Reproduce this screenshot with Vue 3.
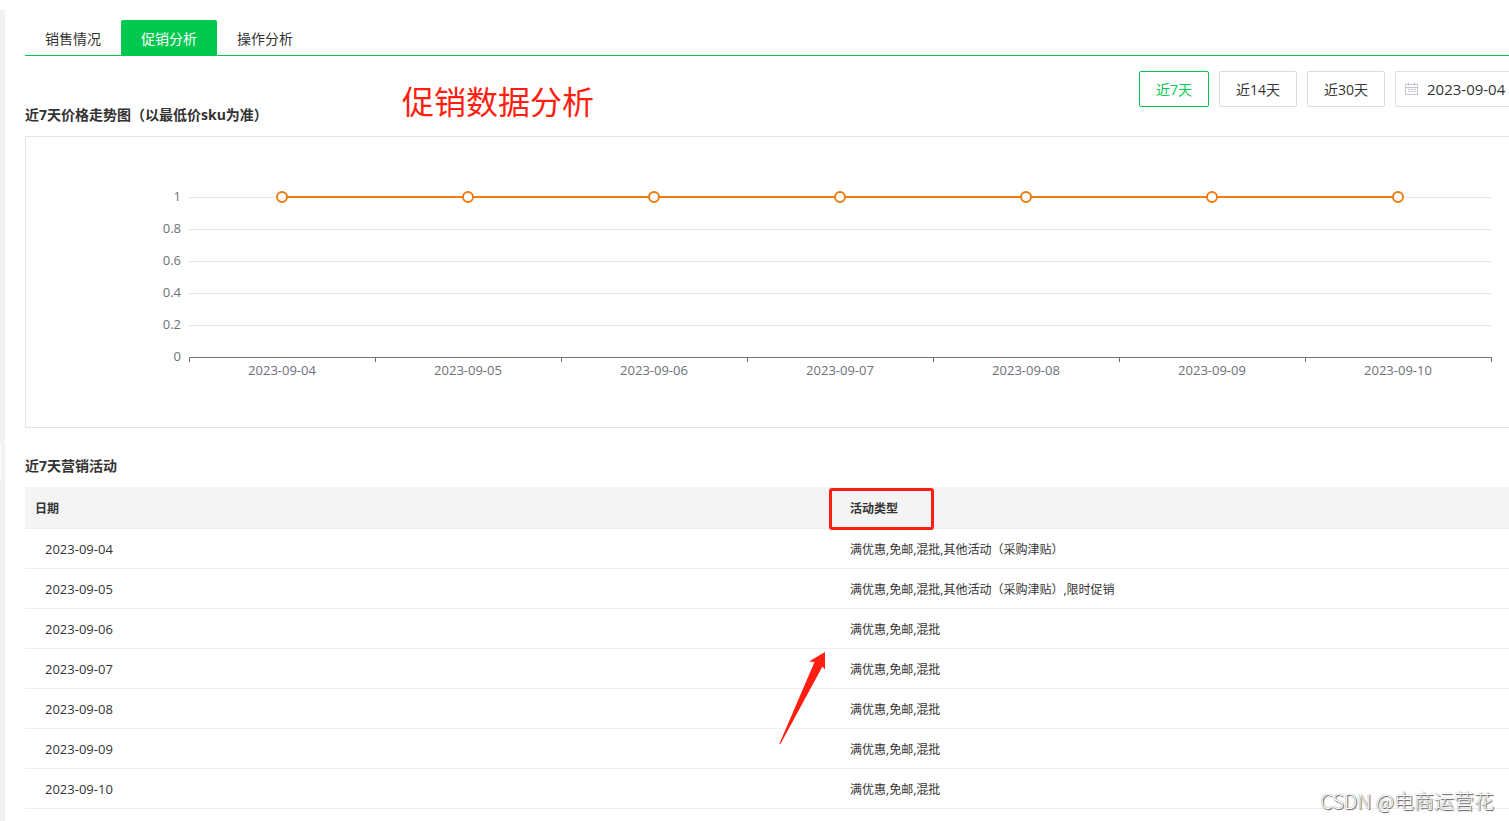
<script setup>
import { ref, computed } from 'vue';

const tabs = ['销售情况', '促销分析', '操作分析'];
const activeTab = ref('促销分析');

const ranges = [7, 14, 30];
const activeRange = ref(7);
const startDate = ref('2023-09-04');

const trend = [
  { date: '2023-09-04', price: 1 },
  { date: '2023-09-05', price: 1 },
  { date: '2023-09-06', price: 1 },
  { date: '2023-09-07', price: 1 },
  { date: '2023-09-08', price: 1 },
  { date: '2023-09-09', price: 1 },
  { date: '2023-09-10', price: 1 },
];

const activities = [
  { date: '2023-09-04', type: '满优惠,免邮,混批,其他活动（采购津贴）' },
  { date: '2023-09-05', type: '满优惠,免邮,混批,其他活动（采购津贴）,限时促销' },
  { date: '2023-09-06', type: '满优惠,免邮,混批' },
  { date: '2023-09-07', type: '满优惠,免邮,混批' },
  { date: '2023-09-08', type: '满优惠,免邮,混批' },
  { date: '2023-09-09', type: '满优惠,免邮,混批' },
  { date: '2023-09-10', type: '满优惠,免邮,混批' },
];

const steps = [1, 0.8, 0.6, 0.4, 0.2, 0];
const plotHeight = 160;

// x in percent so that the plot follows the card width, y in pixels
const points = computed(() =>
  trend.map((item, i) => ({
    date: item.date,
    x: ((i + 0.5) * 100) / trend.length + '%',
    y: (1 - item.price) * plotHeight,
  }))
);

function tickX(i) {
  return (i * 100) / trend.length + '%';
}
</script>

<template>
  <div class="page">
    <aside class="side"><span class="side-handle"></span></aside>
    <main>
      <nav class="tabs">
        <button
          v-for="tab in tabs"
          :key="tab"
          type="button"
          :class="{ active: tab === activeTab }"
          @click="activeTab = tab"
        >{{ tab }}</button>
      </nav>

      <section class="trend">
        <div class="trend-head">
          <h2>近7天价格走势图（以最低价sku为准）</h2>
          <div class="filters">
            <button
              v-for="days in ranges"
              :key="days"
              type="button"
              :class="{ active: days === activeRange }"
              @click="activeRange = days"
            >近{{ days }}天</button>
            <label class="date-box">
              <svg width="14" height="14" viewBox="0 0 14 14" fill="none" stroke="#c0c4cc">
                <path d="M0.5 2.5h12v10h-12zM0.5 5.5h12M3.5 0.5v3M9.5 0.5v3" />
                <path d="M3 7.5h2M6 7.5h2M9 7.5h2M3 9.5h2M6 9.5h2M9 9.5h2" />
              </svg>
              <input v-model="startDate" type="text" aria-label="开始日期">
            </label>
          </div>
          <div class="note">促销数据分析</div>
        </div>

        <div class="chart">
          <svg class="plot" role="img" aria-label="近7天价格走势图">
            <g v-for="(step, i) in steps" :key="step">
              <rect v-if="step > 0" x="0" :y="i * 32" width="100%" height="1" class="grid-line" />
              <text x="-8" :y="i * 32 + 4" text-anchor="end">{{ step }}</text>
            </g>
            <rect x="0" :y="plotHeight" width="100%" height="1" class="axis" />
            <rect v-for="i in trend.length + 1" :key="i" :x="tickX(i - 1)" :y="plotHeight" width="1" height="5" class="axis" />
            <line
              v-for="(point, i) in points.slice(1)"
              :key="point.date"
              :x1="points[i].x"
              :y1="points[i].y"
              :x2="point.x"
              :y2="point.y"
              class="series"
            />
            <g v-for="point in points" :key="point.date">
              <circle :cx="point.x" :cy="point.y" r="5" class="dot" />
              <text :x="point.x" :y="plotHeight + 18" text-anchor="middle">{{ point.date }}</text>
            </g>
          </svg>
        </div>
      </section>

      <section class="activity">
        <h2>近7天营销活动</h2>
        <table>
          <thead>
            <tr>
              <th class="col-date">日期</th>
              <th class="col-type">
                活动类型
                <span class="mark-box"></span>
                <svg class="mark-arrow" width="48" height="94" viewBox="0 0 48 94">
                  <path d="M46 1L30 10.5L35.5 11L0.5 92.5Q1 94 2 92L43.5 15.5L46 18.5Z" fill="#ff1e10" />
                </svg>
              </th>
            </tr>
          </thead>
          <tbody>
            <tr v-for="item in activities" :key="item.date">
              <td class="day">{{ item.date }}</td>
              <td>{{ item.type }}</td>
            </tr>
          </tbody>
        </table>
      </section>
    </main>
    <div class="watermark">CSDN @电商运营花</div>
  </div>
</template>

<style>
body {
  background: #fff;
  overflow-x: hidden;
}
</style>

<style scoped>
.page {
  position: relative;
  display: flex;
  min-height: 100vh;
  box-sizing: border-box;
  padding-top: 10px;
  color: #333;
  font-family: "Open Sans", "Noto Sans CJK SC", sans-serif;
  font-size: 14px;
}

button,
input {
  font: inherit;
  color: inherit;
}

.side {
  position: relative;
  flex: 0 0 5px;
  background: #f2f2f2;
}

.side-handle {
  position: absolute;
  top: 435px;
  left: 0;
  width: 1px;
  height: 35px;
  background: #fff;
}

main {
  flex: 1;
  min-width: 0;
  padding: 10px 0 0 20px;
}

.tabs {
  display: flex;
  border-bottom: 1px solid #00c94d;
}

.tabs button {
  height: 35px;
  padding: 0 20px;
  border: 0;
  border-radius: 2px 2px 0 0;
  background: none;
  cursor: pointer;
}

.tabs .active {
  background: #00c94d;
  color: #fff;
}

h2 {
  margin: 0;
  font-size: 14px;
  line-height: 22px;
  font-weight: 700;
}

.trend-head {
  position: relative;
  display: flex;
  justify-content: space-between;
  height: 80px;
}

.trend-head h2 {
  align-self: flex-end;
  padding-bottom: 10px;
}

.note {
  position: absolute;
  top: 20px;
  left: 377px;
  color: #ff1e10;
  font-family: "Noto Sans CJK SC", sans-serif;
  font-size: 32px;
  line-height: 48px;
}

.filters {
  display: flex;
  align-items: flex-start;
  gap: 10px;
  padding-top: 15px;
}

.filters button {
  height: 36px;
  padding: 0 16px;
  border: 1px solid #dcdcdc;
  border-radius: 2px;
  background: #fff;
  cursor: pointer;
}

.filters .active {
  border-color: #00c94d;
  color: #00c94d;
}

.date-box {
  display: flex;
  align-items: center;
  gap: 8px;
  width: 114px;
  height: 36px;
  box-sizing: border-box;
  padding-left: 9px;
  border: 1px solid #dcdfe6;
  border-right: 0;
  border-radius: 2px 0 0 2px;
}

.date-box svg {
  flex: none;
}

.date-box input {
  width: 82px;
  padding: 0;
  border: 0;
  outline: 0;
  background: none;
  font-size: 15px;
}

.chart {
  padding: 60px 18px 40px 163px;
  border: 1px solid #e4e4e4;
  border-right: 0;
}

.plot {
  display: block;
  width: 100%;
  height: 190px;
  overflow: visible;
}

.plot text {
  fill: #6e7079;
  font-size: 13px;
}

.grid-line {
  fill: #e0e6f1;
}

.axis {
  fill: #6e7079;
  shape-rendering: crispEdges;
}

.series {
  stroke: #ee7b0c;
  stroke-width: 2;
}

.dot {
  fill: #fff;
  stroke: #ee7b0c;
  stroke-width: 2;
}

.activity h2 {
  padding: 27px 0 10px;
}

table {
  width: 100%;
  border-spacing: 0;
  table-layout: fixed;
  font-size: 12px;
  text-align: left;
}

th,
td {
  box-sizing: border-box;
  height: 40px;
  padding: 0 20px;
  border-bottom: 1px solid #ebeef5;
}

th {
  height: 42px;
  background: #f4f4f4;
  font-weight: 700;
}

.col-date {
  width: 54.25%;
  padding-left: 10px;
}

.col-type {
  position: relative;
}

.day {
  font-size: 13px;
}

.mark-box {
  position: absolute;
  top: 1px;
  left: -1px;
  width: 105px;
  height: 42px;
  box-sizing: border-box;
  border: 3px solid #ff1e10;
  border-radius: 3px;
}

.mark-arrow {
  position: absolute;
  top: 164px;
  left: -51px;
}

.watermark {
  position: absolute;
  right: 15px;
  bottom: 5px;
  color: #fff;
  font-family: "Noto Sans CJK SC", sans-serif;
  font-size: 20px;
  font-weight: 300;
  line-height: 30px;
  text-shadow: 1px 1px 1px #555, 0 0 1px #777;
}
</style>
